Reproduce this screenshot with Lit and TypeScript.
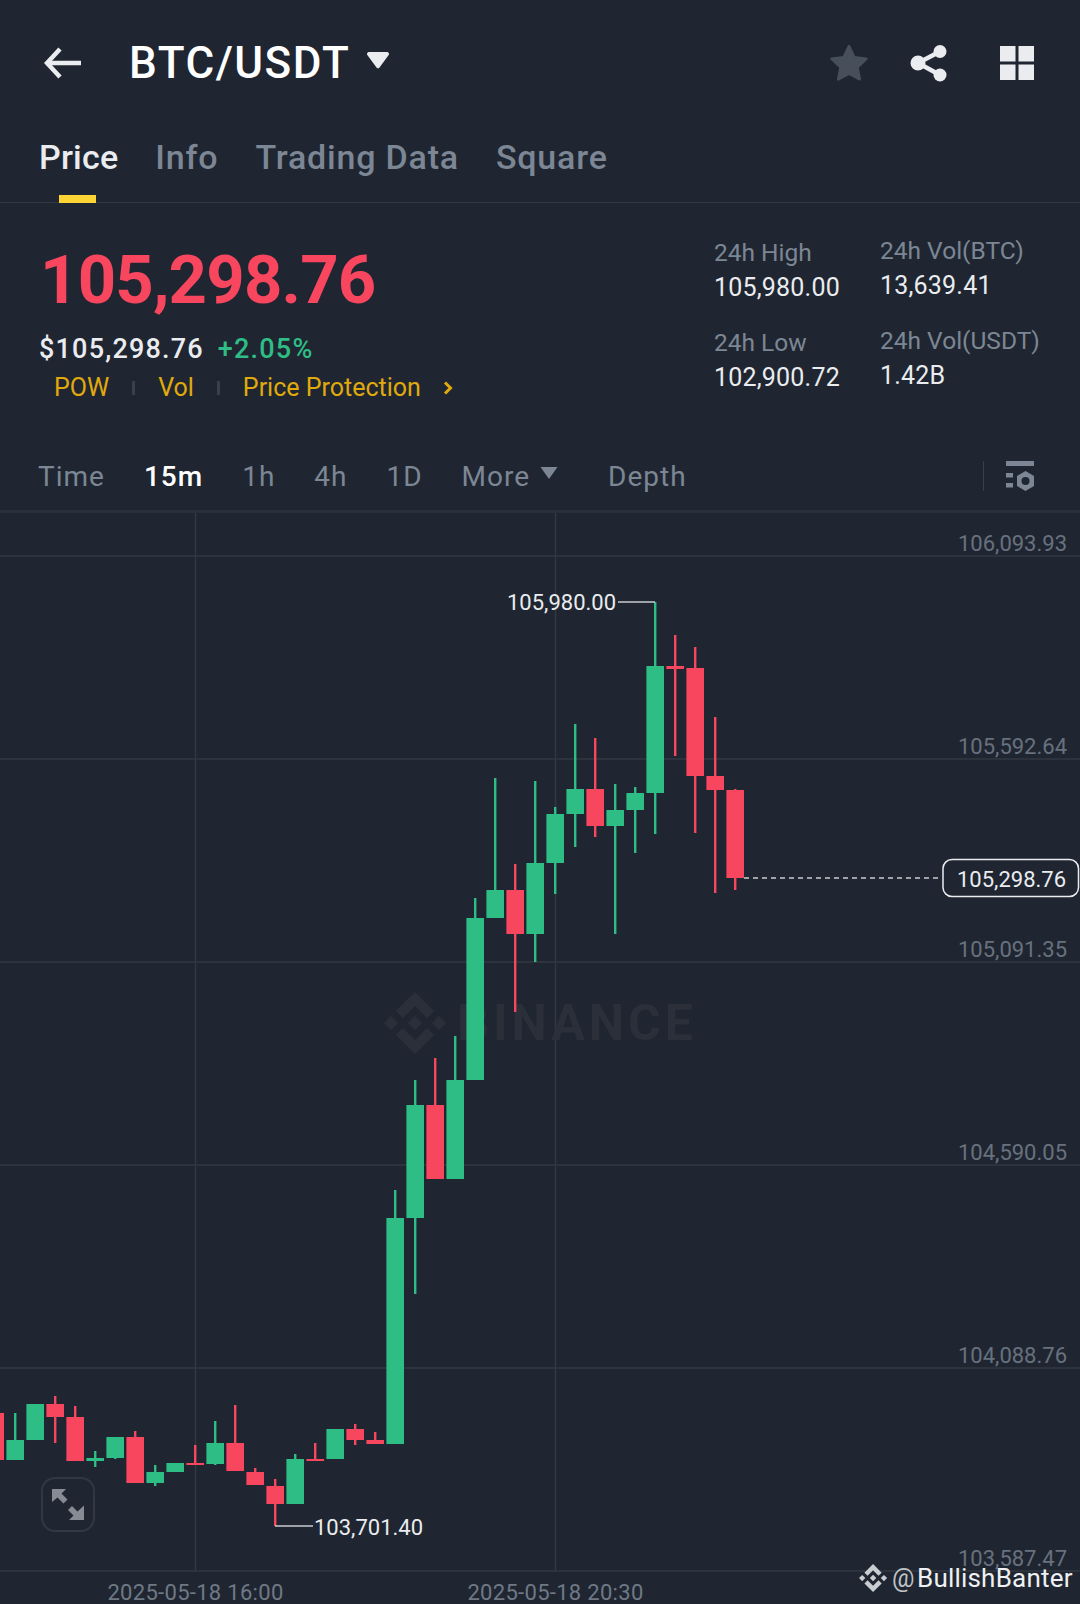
import { LitElement, html, svg, css } from 'lit';
import { customElement } from 'lit/decorators.js';

// x, wick top, wick bottom, body top, body bottom, up?
type Candle = [number, number, number, number, number, boolean];

const candles: Candle[] = [
  [-5, 1405, 1460, 1413, 1460, false],
  [15, 1413, 1460, 1440, 1460, true],
  [35, 1404, 1440, 1404, 1440, true],
  [55, 1396, 1443, 1404, 1417, false],
  [75, 1406, 1461, 1417, 1461, false],
  [95, 1451, 1467, 1458, 1461, true],
  [115, 1437, 1459, 1437, 1458, true],
  [135, 1431, 1483, 1437, 1483, false],
  [155, 1465, 1486, 1472, 1483, true],
  [175, 1463, 1472, 1463, 1472, true],
  [195, 1445, 1465, 1463, 1465, false],
  [215, 1421, 1465, 1443, 1464, true],
  [235, 1405, 1471, 1443, 1471, false],
  [255, 1468, 1485, 1472, 1485, false],
  [275, 1479, 1526, 1486, 1504, false],
  [295, 1454, 1504, 1459, 1504, true],
  [315, 1443, 1461, 1459, 1461, false],
  [335, 1429, 1459, 1429, 1459, true],
  [355, 1424, 1445, 1429, 1440, false],
  [375, 1432, 1444, 1440, 1444, false],
  [395, 1190, 1444, 1218, 1444, true],
  [415, 1080, 1294, 1105, 1218, true],
  [435, 1058, 1179, 1105, 1179, false],
  [455, 1036, 1179, 1080, 1179, true],
  [475, 898, 1080, 918, 1080, true],
  [495, 778, 918, 890, 918, true],
  [515, 864, 1012, 890, 934, false],
  [535, 781, 962, 863, 934, true],
  [555, 807, 894, 814, 863, true],
  [575, 724, 847, 789, 814, true],
  [595, 738, 837, 789, 826, false],
  [615, 784, 934, 810, 826, true],
  [635, 787, 853, 793, 810, true],
  [655, 602, 834, 666, 793, true],
  [675, 635, 756, 666, 669, false],
  [695, 647, 833, 668, 776, false],
  [715, 717, 893, 776, 790, false],
  [735, 789, 890, 790, 878, false],
];

const gridY = [556, 759, 962, 1165, 1368, 1571];
const axisLabels = ['106,093.93', '105,592.64', '105,091.35', '104,590.05', '104,088.76', '103,587.47'];

const LOGO = svg`
  <path d="M38.73 53.2l24.59-24.58 24.6 24.6 14.3-14.31L63.32 0 24.42 38.9l14.31 14.3z"/>
  <path d="M0 63.31l14.3-14.31 14.31 14.31-14.31 14.3z"/>
  <path d="M38.73 73.41l24.59 24.59 24.6-24.6 14.31 14.29-38.9 38.91-38.91-38.88-.02-.02z"/>
  <path d="M98 63.31l14.3-14.31 14.31 14.3-14.31 14.32z"/>
  <path d="M77.83 63.3L63.32 48.78 48.81 63.28l14.51 14.5 14.51-14.48z"/>
`;

@customElement('app-root')
export class AppRoot extends LitElement {
  static styles = css`
    :host {
      display: block;
      position: relative;
      width: 1080px;
      height: 1604px;
      overflow: hidden;
      background: #1f2631;
      color: #eaecef;
      font-family: Roboto, 'Noto Sans', sans-serif;
    }

    .header {
      display: flex;
      align-items: center;
      height: 126px;
      padding: 0 46px 0 44px;
      box-sizing: border-box;
    }

    .back {
      width: 38px;
      height: 32px;
      margin-right: 47px;
    }

    .pair {
      font-size: 44px;
      font-weight: 500;
      letter-spacing: 1.5px;
      color: #fff;
    }

    .pair-caret {
      width: 24px;
      height: 18px;
      margin: 0 0 6px 16px;
    }

    .header-icons {
      margin-left: auto;
      display: flex;
      align-items: center;
    }

    .star {
      margin-right: 41px;
    }

    .share {
      margin-right: 52px;
    }

    .tabs {
      display: flex;
      gap: 37px;
      height: 77px;
      padding-left: 39px;
      border-bottom: 1px solid #323842;
      box-sizing: border-box;
      font-size: 34px;
      font-weight: 500;
      letter-spacing: 0.8px;
      color: #7c8694;
      line-height: 62px;
    }

    .tab {
      position: relative;
    }

    .tab.active {
      color: #eaecef;
      letter-spacing: 0.2px;
    }

    .tab.active::after {
      content: '';
      position: absolute;
      left: 20px;
      width: 37px;
      bottom: -1px;
      height: 8px;
      background: #fcd535;
    }

    .stats {
      display: flex;
      justify-content: space-between;
      height: 237px;
      padding-left: 39px;
      box-sizing: border-box;
    }

    .price {
      font-size: 67px;
      font-weight: 700;
      letter-spacing: -0.8px;
      line-height: 82px;
      margin-top: 36px;
      margin-left: 1px;
      color: #f8465f;
    }

    .fiat {
      display: flex;
      gap: 14px;
      font-size: 27px;
      font-weight: 500;
      letter-spacing: 1.2px;
      line-height: 34px;
      margin-top: 11px;
    }

    .change {
      color: #2ebd85;
    }

    .tags {
      display: flex;
      align-items: center;
      font-size: 25px;
      line-height: 36px;
      color: #e0aa0d;
      padding-left: 15px;
      margin-top: 4px;
    }

    .tag-sep {
      width: 3px;
      height: 14px;
      background: #3a404a;
      margin: 0 23px;
    }

    .chevron {
      width: 10px;
      height: 14px;
      margin-left: 22px;
    }

    .figures {
      display: grid;
      grid-template-columns: 166px 200px;
      grid-auto-rows: 90px;
      margin-top: 33px;
    }

    .figure-left {
      padding-top: 2px;
    }

    .figure-label {
      font-size: 24.5px;
      line-height: 30px;
      color: #7c8694;
    }

    .figure-value {
      font-size: 25px;
      line-height: 34px;
      margin-top: 3px;
      color: #eaecef;
      letter-spacing: 0.2px;
    }

    .toolbar {
      display: flex;
      align-items: center;
      height: 73px;
      padding: 2px 46px 0 38px;
      box-sizing: border-box;
      border-bottom: 3px solid #2a303a;
      font-size: 28px;
      letter-spacing: 1px;
      color: #7c8694;
    }

    .toolbar span {
      margin-right: 39px;
    }

    .toolbar .on {
      color: #fff;
      font-weight: 500;
    }

    .toolbar .more {
      margin-right: 10px;
    }

    .more-caret {
      width: 18px;
      height: 12px;
      margin: 0 50px 6px 0;
    }

    .tool-sep {
      margin-left: auto;
      width: 1px;
      height: 30px;
      background: #3a404a;
      margin-right: 22px;
    }

    .chart {
      display: block;
    }

    .grid {
      stroke: #323842;
      stroke-width: 1.5;
    }

    .axis {
      font-size: 22px;
      fill: #68717e;
      text-anchor: end;
    }

    .mark {
      font-size: 22px;
      fill: #eaecef;
    }

    .mark-line {
      stroke: #c9ccd1;
      stroke-width: 1.5;
      fill: none;
    }

    .date {
      font-size: 22px;
      letter-spacing: 0.3px;
      fill: #6f7986;
      text-anchor: middle;
    }

    .wm {
      font-size: 50px;
      font-weight: 700;
      fill: #2a2f3a;
      letter-spacing: 4px;
    }

    .wm-logo {
      fill: #2a2f3a;
    }

    .up {
      fill: #2ebd85;
    }

    .down {
      fill: #f8465f;
    }

    .last-line {
      stroke: #c9ccd1;
      stroke-width: 1.5;
      stroke-dasharray: 5 4;
    }

    .last-box {
      fill: #1f2631;
      stroke: #eaecef;
      stroke-width: 1.5;
    }

    .handle {
      font-size: 26px;
      fill: #eef0f2;
      letter-spacing: 0.2px;
    }

    .at {
      font-size: 25px;
      fill: #bfc2c6;
    }

    .credit-logo {
      fill: #c9ccd1;
    }

    .expand {
      position: absolute;
      left: 41px;
      top: 1477px;
    }
  `;

  private renderCandle([x, wt, wb, bt, bb, up]: Candle) {
    const cls = up ? 'up' : 'down';
    return svg`
      <rect class=${cls} x=${x - 1} y=${wt} width="2.4" height=${wb - wt}></rect>
      <rect class=${cls} x=${x - 8.6} y=${bt} width="17.6" height=${Math.max(bb - bt, 2)}></rect>
    `;
  }

  private renderChart() {
    return html`
      <svg class="chart" width="1080" height="1091" viewBox="0 513 1080 1091">
        ${gridY.map((y) => svg`<line class="grid" x1="0" x2="1080" y1=${y} y2=${y}></line>`)}
        <line class="grid" x1="195.5" x2="195.5" y1="513" y2="1571"></line>
        <line class="grid" x1="555.5" x2="555.5" y1="513" y2="1571"></line>

        <g class="wm-logo" transform="translate(384 992) scale(0.49)">${LOGO}</g>
        <text class="wm" x="457" y="1040">BINANCE</text>

        ${gridY.map((y, i) => svg`<text class="axis" x="1067" y=${y - 5}>${axisLabels[i]}</text>`)}

        ${candles.map((c) => this.renderCandle(c))}

        <text class="mark" x="507" y="610">105,980.00</text>
        <polyline class="mark-line" points="618,602 655,602"></polyline>
        <text class="mark" x="314" y="1535">103,701.40</text>
        <polyline class="mark-line" points="275,1526 313,1526"></polyline>

        <line class="last-line" x1="744" x2="940" y1="878" y2="878"></line>
        <rect class="last-box" x="943" y="859.5" width="135.5" height="37" rx="9"></rect>
        <text class="mark" x="957" y="887">105,298.76</text>

        <text class="date" x="195.5" y="1600">2025-05-18 16:00</text>
        <text class="date" x="555.5" y="1600">2025-05-18 20:30</text>

        <g class="credit-logo" transform="translate(859 1564) scale(0.222)">${LOGO}</g>
        <text class="at" x="892" y="1587">@</text>
        <text class="handle" x="917" y="1587">BullishBanter</text>
      </svg>
    `;
  }

  render() {
    return html`
      <div class="header">
        <svg class="back" viewBox="0 0 38 32" fill="none" stroke="#eaecef" stroke-width="4.5">
          <path d="M37 16H4"></path>
          <path d="M16 2L3 16l13 14"></path>
        </svg>
        <div class="pair">BTC/USDT</div>
        <svg class="pair-caret" viewBox="0 0 24 18">
          <path d="M3 1h18a2 2 0 0 1 1.5 3.3L13.500 16.500a2 2 0 0 1-3 0L1.500 4.300A2 2 0 0 1 3 1z" fill="#eaecef"></path>
        </svg>
        <div class="header-icons">
          <svg class="star" width="40" height="40" viewBox="0 0 38 38">
            <path d="M19 3l5 10.500 11.500 1.500-8.500 8 2.200 11.500L19 29l-10.200 5.500L11 23 2.500 15 14 13.500z"
              fill="#474f5a" stroke="#474f5a" stroke-width="2.500" stroke-linejoin="round"></path>
          </svg>
          <svg class="share" width="38" height="38" viewBox="0 0 38 38" fill="#eaecef">
            <circle cx="8" cy="19" r="7.500"></circle>
            <circle cx="30" cy="7.500" r="6.500"></circle>
            <circle cx="30" cy="31" r="6.500"></circle>
            <path d="M8 19L30 7.500M8 19l22 12" stroke="#eaecef" stroke-width="4.500"></path>
          </svg>
          <svg width="34" height="34" viewBox="0 0 34 34" fill="#eaecef">
            <rect width="15.500" height="15.500"></rect>
            <rect x="18.500" width="15.500" height="15.500"></rect>
            <rect y="18.500" width="15.500" height="15.500"></rect>
            <rect x="18.500" y="18.500" width="15.500" height="15.500"></rect>
          </svg>
        </div>
      </div>

      <div class="tabs">
        <div class="tab active">Price</div>
        <div class="tab">Info</div>
        <div class="tab">Trading Data</div>
        <div class="tab">Square</div>
      </div>

      <div class="stats">
        <div>
          <div class="price">105,298.76</div>
          <div class="fiat"><span>$105,298.76</span><span class="change">+2.05%</span></div>
          <div class="tags">
            <span>POW</span><i class="tag-sep"></i><span>Vol</span><i class="tag-sep"></i><span>Price Protection</span>
            <svg class="chevron" viewBox="0 0 10 14" fill="none" stroke="#e0aa0d" stroke-width="3">
              <path d="M2 1.500L7.500 7 2 12.500"></path>
            </svg>
          </div>
        </div>
        <div class="figures">
          <div class="figure-left"><div class="figure-label">24h High</div><div class="figure-value">105,980.00</div></div>
          <div><div class="figure-label">24h Vol(BTC)</div><div class="figure-value">13,639.41</div></div>
          <div class="figure-left"><div class="figure-label">24h Low</div><div class="figure-value">102,900.72</div></div>
          <div><div class="figure-label">24h Vol(USDT)</div><div class="figure-value">1.42B</div></div>
        </div>
      </div>

      <div class="toolbar">
        <span>Time</span>
        <span class="on">15m</span>
        <span>1h</span>
        <span>4h</span>
        <span>1D</span>
        <span class="more">More</span>
        <svg class="more-caret" viewBox="0 0 17 12"><path d="M0 0h17L8.500 12z" fill="#7c8694"></path></svg>
        <span>Depth</span>
        <i class="tool-sep"></i>
        <svg width="28" height="30" viewBox="0 0 28 30" fill="#7c8694">
          <rect x="0" y="0" width="28" height="5"></rect>
          <rect x="0" y="12" width="7" height="4.500"></rect>
          <rect x="0" y="22" width="7" height="4.500"></rect>
          <path d="M19.500 10l8.500 5v10l-8.500 5-8.500-5V15z"></path>
          <circle cx="19.500" cy="20" r="4" fill="#1f2631"></circle>
        </svg>
      </div>

      ${this.renderChart()}

      <svg class="expand" width="54" height="55" viewBox="0 0 54 55" fill="none">
        <rect x="1" y="1" width="52" height="53" rx="13" stroke="#323842" stroke-width="2"></rect>
        <path d="M11 12h14l-4.500 4.500 6 6-4 4-6-6L11 25z" fill="#868b94"></path>
        <path d="M43 43H28l4.500-4.500-5.500-5.500 4-4 5.500 5.500 6.500-6z" fill="#868b94"></path>
      </svg>
    `;
  }
}

declare global {
  interface HTMLElementTagNameMap {
    'app-root': AppRoot;
  }
}
